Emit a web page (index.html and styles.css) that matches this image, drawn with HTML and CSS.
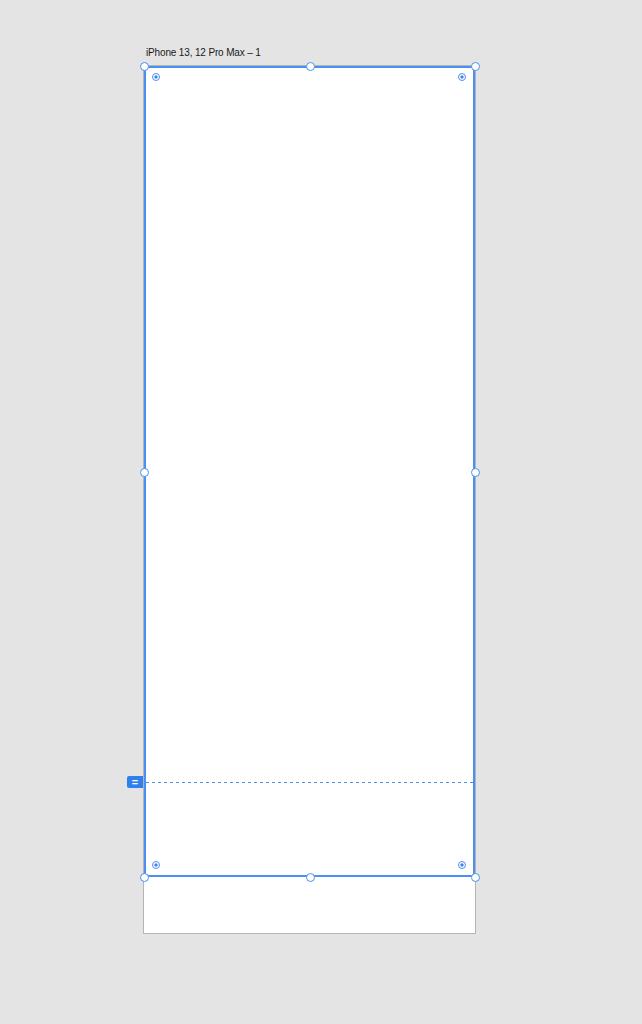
FILE: index.html
```html
<!DOCTYPE html>
<html lang="en">
<head>
    <meta charset="UTF-8">
    <title>Artboard</title>
    <link rel="stylesheet" href="styles.css">
</head>
<body>

<div class="workspace">
    <div class="board-label">iPhone 13, 12 Pro Max – 1</div>
    <div class="artboard">
        <!-- seleccion del artboard -->
        <div class="selection">
            <span class="handle h-tl"></span>
            <span class="handle h-tc"></span>
            <span class="handle h-tr"></span>
            <span class="handle h-ml"></span>
            <span class="handle h-mr"></span>
            <span class="handle h-bl"></span>
            <span class="handle h-bc"></span>
            <span class="handle h-br"></span>

            <span class="pin p-tl"></span>
            <span class="pin p-tr"></span>
            <span class="pin p-bl"></span>
            <span class="pin p-br"></span>

            <div class="fold-line"></div>
            <div class="fold-badge">=</div>
        </div>
    </div>
</div>

</body>
</html>
```

FILE: styles.css
```css
body {
    margin: 0;
    background-color: #e4e4e4;
    font-family: 'Liberation Sans', Arial, sans-serif;
    height: 1024px;
    overflow: hidden;
}
.workspace {
    padding-top: 46px;
    padding-left: 143px;
}
.board-label {
    font-size: 10px;
    letter-spacing: -0.15px;
    color: #1a1a1a;
    height: 14px;
    line-height: 14px;
    padding-left: 3px;
    margin-bottom: 5px;
}
.artboard {
    position: relative;
    width: 331px;
    height: 867px;
    background: #fff;
    border: 1px solid #b4b4b4;
}
.selection {
    position: absolute;
    top: 0;
    left: 0;
    width: 331px;
    height: 811px;
    box-shadow: inset 0 0 0 2px #4a90f2;
}
.handle {
    position: absolute;
    width: 9px;
    height: 9px;
    border-radius: 50%;
    background: #fff;
    border: 1.2px solid #4a90f2;
    box-sizing: border-box;
    margin: -4px 0 0 -4px;
}
.h-tl { top: 0; left: 0; }
.h-tc { top: 0; left: 50%; }
.h-tr { top: 0; left: 100%; }
.h-ml { top: 50%; left: 0; }
.h-mr { top: 50%; left: 100%; }
.h-bl { top: 100%; left: 0; }
.h-bc { top: 100%; left: 50%; }
.h-br { top: 100%; left: 100%; }

.pin {
    position: absolute;
    width: 8px;
    height: 8px;
    border-radius: 50%;
    border: 1px solid #4a90f2;
    box-sizing: border-box;
    background: radial-gradient(circle, #3a87f2 0 1.4px, transparent 1.8px);
}
.p-tl { top: 7px; left: 8px; }
.p-tr { top: 7px; right: 9px; }
.p-bl { bottom: 8px; left: 8px; }
.p-br { bottom: 8px; right: 9px; }

.fold-line {
    position: absolute;
    top: 716px;
    left: 2px;
    right: 2px;
    height: 1px;
    background: repeating-linear-gradient(to right, #4a90f2 0 3px, transparent 3px 6px);
}
.fold-badge {
    position: absolute;
    top: 710px;
    left: -17px;
    width: 16px;
    height: 12px;
    border-radius: 2px 0 0 2px;
    background: #2f80ed;
    color: #fff;
    font-size: 11px;
    font-weight: bold;
    line-height: 12px;
    text-align: center;
}
```
